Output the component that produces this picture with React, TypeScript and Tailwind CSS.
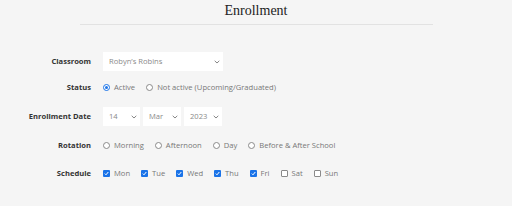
import React from "react";

const Chevron = () => (
  <svg width="6" height="4" viewBox="0 0 6 4" className="shrink-0">
    <path d="M0.7 0.8 L3 3 L5.3 0.8" fill="none" stroke="#777" strokeWidth="0.9" />
  </svg>
);

const Select = ({ value, w }: { value: string; w: string }) => (
  <div className={`flex h-[19px] items-center justify-between bg-white pl-[6px] pr-[3px] text-[#8a8a8a] ${w}`}>
    <span>{value}</span>
    <Chevron />
  </div>
);

const Radio = ({ checked, label }: { checked?: boolean; label: string }) => (
  <div className="flex items-center gap-[4px]">
    {checked ? (
      <span className="flex h-[7px] w-[7px] items-center justify-center rounded-full border border-[#1a73e8] bg-white">
        <span className="h-[3px] w-[3px] rounded-full bg-[#1a73e8]" />
      </span>
    ) : (
      <span className="h-[7px] w-[7px] rounded-full border border-[#8a8a8a] bg-white" />
    )}
    <span>{label}</span>
  </div>
);

const Check = ({ checked, label }: { checked?: boolean; label: string }) => (
  <div className="flex items-center gap-[4px]">
    {checked ? (
      <span className="flex h-[7px] w-[7px] items-center justify-center rounded-[1px] bg-[#1a73e8]">
        <svg width="5" height="5" viewBox="0 0 5 5">
          <path d="M0.8 2.6 L2 3.8 L4.3 1" fill="none" stroke="#fff" strokeWidth="1" />
        </svg>
      </span>
    ) : (
      <span className="h-[7px] w-[7px] rounded-[1px] border border-[#8a8a8a] bg-white" />
    )}
    <span>{label}</span>
  </div>
);

const Row = ({ label, children, cls }: { label: string; children: React.ReactNode; cls: string }) => (
  <div className={`flex items-center ${cls}`}>
    <div className="w-[92px] shrink-0 pr-[1px] text-right font-bold text-[#333]">{label}</div>
    <div className="ml-[11px] flex items-center">{children}</div>
  </div>
);

export default function App() {
  return (
    <div
      className="h-[206px] w-[512px] overflow-hidden bg-[#f5f5f5] text-[7.6px] text-[#777]"
      style={{ fontFamily: '"Open Sans", sans-serif' }}
    >
      <div className="mx-auto w-[353px] border-b border-[#e2e2e2] pt-[1px] pb-[3px] text-center">
        <h1
          className="text-[14px] leading-[20px] text-[#222]"
          style={{ fontFamily: '"Liberation Serif", serif' }}
        >
          Enrollment
        </h1>
      </div>
      <div className="flex flex-col">
        <Row label="Classroom" cls="mt-[27px] h-[19px]">
          <Select value="Robyn’s Robins" w="w-[120px]" />
        </Row>
        <Row label="Status" cls="mt-[10px] h-[14px]">
          <div className="flex items-center gap-[11px]">
            <Radio checked label="Active" />
            <Radio label="Not active (Upcoming/Graduated)" />
          </div>
        </Row>
        <Row label="Enrollment Date" cls="mt-[12px] h-[19px]">
          <div className="flex items-center gap-[3px]">
            <Select value="14" w="w-[37px]" />
            <Select value="Mar" w="w-[38px]" />
            <Select value="2023" w="w-[38px]" />
          </div>
        </Row>
        <Row label="Rotation" cls="mt-[13px] h-[14px]">
          <div className="flex items-center gap-[11px]">
            <Radio label="Morning" />
            <Radio label="Afternoon" />
            <Radio label="Day" />
            <Radio label="Before & After School" />
          </div>
        </Row>
        <Row label="Schedule" cls="mt-[14px] h-[14px]">
          <div className="flex items-center gap-[11px]">
            <Check checked label="Mon" />
            <Check checked label="Tue" />
            <Check checked label="Wed" />
            <Check checked label="Thu" />
            <Check checked label="Fri" />
            <Check label="Sat" />
            <Check label="Sun" />
          </div>
        </Row>
      </div>
    </div>
  );
}
